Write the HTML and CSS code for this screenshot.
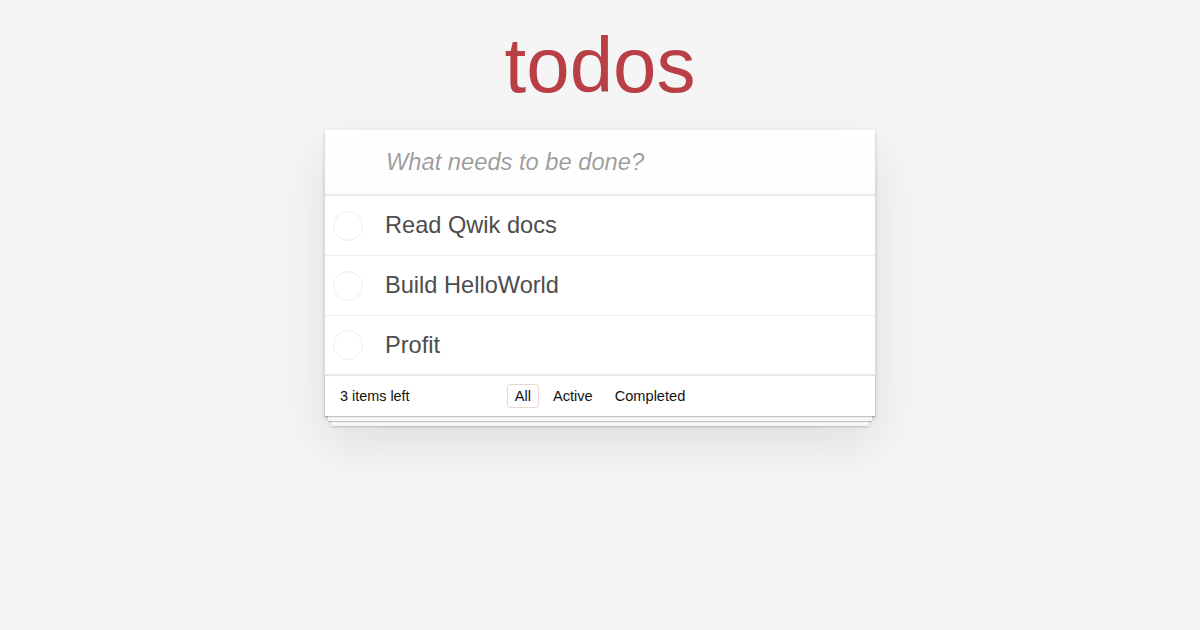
FILE: index.html
```html
<!DOCTYPE html>
<html lang="en">
<head>
<meta charset="utf-8">
<title>todos</title>
<link rel="stylesheet" href="styles.css">
</head>
<body>
<h1 class="title">todos</h1>
<section class="todoapp">
  <header class="header">
    <input class="new-todo" placeholder="What needs to be done?">
  </header>
  <ul class="todo-list">
    <li class="todo"><span class="toggle"></span><label class="todo-label">Read Qwik docs</label></li>
    <li class="todo"><span class="toggle"></span><label class="todo-label">Build HelloWorld</label></li>
    <li class="todo"><span class="toggle"></span><label class="todo-label">Profit</label></li>
  </ul>
  <footer class="footer">
    <span class="count">3 items left</span>
    <ul class="filters">
      <li><a class="filter selected" href="#">All</a></li>
      <li><a class="filter" href="#">Active</a></li>
      <li><a class="filter" href="#">Completed</a></li>
    </ul>
    <span class="spacer"></span>
  </footer>
</section>
</body>
</html>
```
FILE: styles.css
```css
html, body {
  margin: 0;
  padding: 0;
}
html {
  min-height: 100%;
  background: #f5f5f5;
}
body {
  min-height: 630px;
  background: #f5f5f5;
  font-family: "Liberation Sans", Arial, sans-serif;
  font-size: 14px;
  line-height: 1.4em;
  color: #111;
  overflow: hidden;
}
.title {
  margin: 9px 0 9px;
  font-size: 78px;
  line-height: 112px;
  font-weight: normal;
  text-align: center;
  color: #b83f45;
}
.todoapp {
  width: 550px;
  margin: 0 auto 40px;
  background: #fff;
  box-shadow: 0 2px 4px 0 rgba(0,0,0,0.2), 0 25px 50px 0 rgba(0,0,0,0.1);
}
.header {
  display: flex;
}
.new-todo {
  flex: 1;
  box-sizing: border-box;
  height: 65px;
  margin: 0;
  padding: 16px 16px 16px 61px;
  border: none;
  outline: none;
  background: rgba(0,0,0,0.003);
  box-shadow: inset 0 -2px 1px rgba(0,0,0,0.03);
  font-family: inherit;
  font-size: 23.7px;
  line-height: 1.4em;
  color: #4d4d4d;
}
.new-todo::placeholder {
  font-style: italic;
  color: rgba(0,0,0,0.4);
}
.todo-list {
  margin: 0;
  padding: 0;
  list-style: none;
  border-top: 1px solid #e6e6e6;
}
.todo {
  display: flex;
  align-items: center;
  border-bottom: 1px solid #ededed;
}
.toggle {
  box-sizing: border-box;
  width: 30px;
  height: 30px;
  margin-left: 8px;
  margin-top: 1px;
  border: 1px solid #ededed;
  border-radius: 50%;
  flex-shrink: 0;
}
.todo-label {
  padding: 15px 15px 15px 22px;
  font-size: 23.6px;
  line-height: 28.8px;
  color: #4d4d4d;
}
.footer {
  display: flex;
  align-items: center;
  justify-content: space-between;
  height: 20px;
  padding: 10px 15px;
  border-top: 1px solid #e6e6e6;
  color: #111;
  font-size: 14.4px;
  box-shadow: 0 1px 1px rgba(0,0,0,0.2),
              0 8px 0 -3px #f6f6f6,
              0 9px 1px -3px rgba(0,0,0,0.2),
              0 16px 0 -6px #f6f6f6,
              0 17px 2px -6px rgba(0,0,0,0.2);
}
.count,
.spacer {
  flex: 1;
}
.filters {
  display: flex;
  margin: 0;
  padding: 0;
  list-style: none;
}
.filter {
  display: block;
  margin: -2px 3px;
  padding: 3px 7px;
  border: 1px solid transparent;
  border-radius: 3px;
  color: inherit;
  text-decoration: none;
  line-height: 16px;
  font-size: 14.6px;
}
.filter.selected {
  border-color: rgba(175,47,47,0.2);
}
```
